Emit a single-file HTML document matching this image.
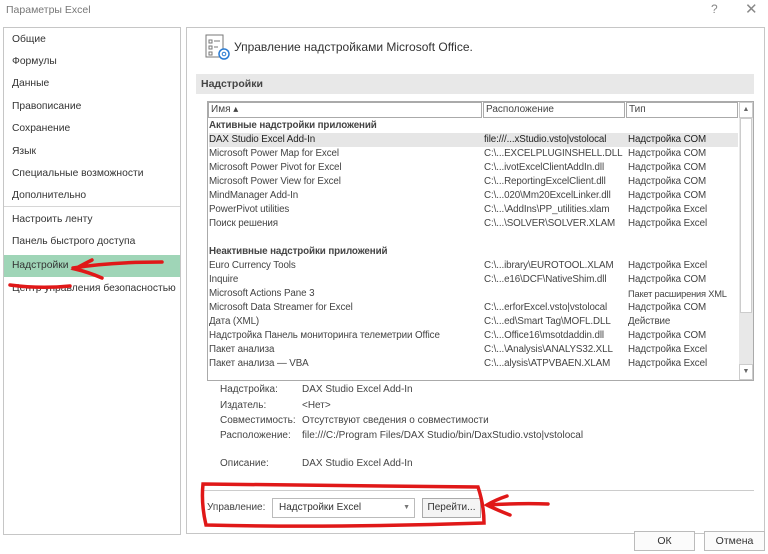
<!DOCTYPE html>
<html><head><meta charset="utf-8"><style>
*{margin:0;padding:0;box-sizing:border-box}
body{width:768px;height:554px;background:#fff;font-family:"Liberation Sans",sans-serif;font-size:10px;color:#444;position:relative;overflow:hidden}
.a{position:absolute;white-space:nowrap}
.l{left:12px;font-size:10.3px;color:#333}
.r{position:absolute;left:209px;height:14px;line-height:14px;width:529px;font-size:9.8px;letter-spacing:-0.1px}
.r span{position:absolute}
.c2{left:275px}.c3{left:419px}
</style></head><body>
<div class="a" style="left:6px;top:4px;color:#777;font-size:10.5px">Параметры Excel</div>
<div class="a" style="left:711px;top:2px;color:#888;font-size:12px">?</div>
<div class="a" style="left:745px;top:0px;color:#888;font-size:15px">✕</div>
<div class="a" style="left:3px;top:27px;width:178px;height:508px;border:1px solid #c6c6c6"></div>
<div class="a" style="left:186px;top:27px;width:579px;height:507px;border:1px solid #c6c6c6"></div>
<div class="a l" style="top:34px">Общие</div>
<div class="a l" style="top:56px">Формулы</div>
<div class="a l" style="top:78px">Данные</div>
<div class="a l" style="top:101px">Правописание</div>
<div class="a l" style="top:123px">Сохранение</div>
<div class="a l" style="top:146px">Язык</div>
<div class="a l" style="top:168px">Специальные возможности</div>
<div class="a l" style="top:190px">Дополнительно</div>
<div class="a" style="left:4px;top:206px;width:176px;border-top:1px solid #d6d6d6"></div>
<div class="a l" style="top:214px">Настроить ленту</div>
<div class="a l" style="top:236px">Панель быстрого доступа</div>
<div class="a" style="left:4px;top:255px;width:176px;height:22px;background:#9fd5b7"></div>
<div class="a l" style="top:260px">Надстройки</div>
<div class="a l" style="top:283px">Центр управления безопасностью</div>
<svg class="a" style="left:205px;top:34px" width="26" height="28" viewBox="0 0 26 28"><rect x="1" y="1" width="17" height="22" fill="none" stroke="#777"/><path d="M4 6h3v3H4zM4 12h3v3H4zM4 18h3v3H4z" fill="none" stroke="#777"/><path d="M9 7h6M9 13h4" stroke="#777"/><circle cx="19" cy="20" r="5" fill="#fff" stroke="#2b7cd3" stroke-width="1.5"/><circle cx="19" cy="20" r="1.8" fill="none" stroke="#2b7cd3"/></svg>
<div class="a" style="left:234px;top:40px;font-size:12px;color:#333">Управление надстройками Microsoft Office.</div>
<div class="a" style="left:196px;top:74px;width:558px;height:20px;background:#e8e8e8"></div>
<div class="a" style="left:201px;top:78px;font-weight:bold;color:#444;font-size:10.5px">Надстройки</div>
<div class="a" style="left:207px;top:101px;width:547px;height:280px;border:1px solid #aaa"></div>
<div class="a" style="left:208px;top:102px;width:274px;height:16px;border:1px solid #aaa;background:#fff;padding-left:2px;line-height:14px">Имя ▴</div>
<div class="a" style="left:483px;top:102px;width:142px;height:16px;border:1px solid #aaa;line-height:14px;padding-left:2px">Расположение</div>
<div class="a" style="left:626px;top:102px;width:112px;height:16px;border:1px solid #aaa;line-height:14px;padding-left:2px">Тип</div>
<div class="a" style="left:739px;top:102px;width:14px;height:278px;background:#e8e8e8"></div>
<div class="a" style="left:739px;top:102px;width:14px;height:16px;background:#fff;border:1px solid #ccc;font-size:7px;text-align:center;line-height:14px;color:#666">▲</div>
<div class="a" style="left:740px;top:118px;width:12px;height:195px;background:#fff;border:1px solid #ccc"></div>
<div class="a" style="left:739px;top:364px;width:14px;height:16px;background:#fff;border:1px solid #ccc;font-size:7px;text-align:center;line-height:14px;color:#666">▼</div>
<div class="r" style="top:119px;font-weight:bold"><span>Активные надстройки приложений</span></div>
<div class="r" style="top:133px;background:#e6e6e6;color:#222"><span>DAX Studio Excel Add-In</span><span class="c2">file:///...xStudio.vsto|vstolocal</span><span class="c3">Надстройка COM</span></div>
<div class="r" style="top:147px"><span>Microsoft Power Map for Excel</span><span class="c2">C:\...EXCELPLUGINSHELL.DLL</span><span class="c3">Надстройка COM</span></div>
<div class="r" style="top:161px"><span>Microsoft Power Pivot for Excel</span><span class="c2">C:\...ivotExcelClientAddIn.dll</span><span class="c3">Надстройка COM</span></div>
<div class="r" style="top:175px"><span>Microsoft Power View for Excel</span><span class="c2">C:\...ReportingExcelClient.dll</span><span class="c3">Надстройка COM</span></div>
<div class="r" style="top:189px"><span>MindManager Add-In</span><span class="c2">C:\...020\Mm20ExcelLinker.dll</span><span class="c3">Надстройка COM</span></div>
<div class="r" style="top:203px"><span>PowerPivot utilities</span><span class="c2">C:\...\AddIns\PP_utilities.xlam</span><span class="c3">Надстройка Excel</span></div>
<div class="r" style="top:217px"><span>Поиск решения</span><span class="c2">C:\...\SOLVER\SOLVER.XLAM</span><span class="c3">Надстройка Excel</span></div>
<div class="r" style="top:245px;font-weight:bold"><span>Неактивные надстройки приложений</span></div>
<div class="r" style="top:259px"><span>Euro Currency Tools</span><span class="c2">C:\...ibrary\EUROTOOL.XLAM</span><span class="c3">Надстройка Excel</span></div>
<div class="r" style="top:273px"><span>Inquire</span><span class="c2">C:\...e16\DCF\NativeShim.dll</span><span class="c3">Надстройка COM</span></div>
<div class="r" style="top:287px"><span>Microsoft Actions Pane 3</span><span class="c3" style="font-size:9.3px;letter-spacing:-0.2px">Пакет расширения XML</span></div>
<div class="r" style="top:301px"><span>Microsoft Data Streamer for Excel</span><span class="c2">C:\...erforExcel.vsto|vstolocal</span><span class="c3">Надстройка COM</span></div>
<div class="r" style="top:315px"><span>Дата (XML)</span><span class="c2">C:\...ed\Smart Tag\MOFL.DLL</span><span class="c3">Действие</span></div>
<div class="r" style="top:329px"><span>Надстройка Панель мониторинга телеметрии Office</span><span class="c2">C:\...Office16\msotdaddin.dll</span><span class="c3">Надстройка COM</span></div>
<div class="r" style="top:343px"><span>Пакет анализа</span><span class="c2">C:\...\Analysis\ANALYS32.XLL</span><span class="c3">Надстройка Excel</span></div>
<div class="r" style="top:357px"><span>Пакет анализа — VBA</span><span class="c2">C:\...alysis\ATPVBAEN.XLAM</span><span class="c3">Надстройка Excel</span></div>
<div class="a" style="left:220px;top:384px">Надстройка:</div><div class="a" style="left:302px;top:384px">DAX Studio Excel Add-In</div>
<div class="a" style="left:220px;top:400px">Издатель:</div><div class="a" style="left:302px;top:400px">&lt;Нет&gt;</div>
<div class="a" style="left:220px;top:415px">Совместимость:</div><div class="a" style="left:302px;top:415px">Отсутствуют сведения о совместимости</div>
<div class="a" style="left:220px;top:430px">Расположение:</div><div class="a" style="left:302px;top:430px">file:///C:/Program Files/DAX Studio/bin/DaxStudio.vsto|vstolocal</div>
<div class="a" style="left:220px;top:458px">Описание:</div><div class="a" style="left:302px;top:458px">DAX Studio Excel Add-In</div>
<div class="a" style="left:203px;top:490px;width:551px;border-top:1px solid #ccc"></div>
<div class="a" style="left:207px;top:502px">Управление:</div>
<div class="a" style="left:272px;top:498px;width:143px;height:20px;border:1px solid #bbb;padding-left:6px;line-height:18px;color:#333">Надстройки Excel<span style="position:absolute;right:4px;font-size:7px;color:#777">▼</span></div>
<div class="a" style="left:422px;top:498px;width:59px;height:20px;border:1px solid #aaa;background:#f4f4f4;text-align:center;line-height:18px;color:#333">Перейти...</div>
<div class="a" style="left:634px;top:531px;width:61px;height:20px;border:1px solid #bbb;background:#fbfbfb;text-align:center;line-height:18px;color:#333;font-size:10.5px">ОК</div>
<div class="a" style="left:704px;top:531px;width:61px;height:20px;border:1px solid #bbb;background:#fbfbfb;text-align:center;line-height:18px;color:#333;font-size:10.5px">Отмена</div>
<svg class="a" style="left:0;top:0" width="768" height="554">
<g fill="none" stroke="#e01818" stroke-width="3.5" stroke-linecap="round">
<path d="M73 268 Q110 262 162 262 M92 260 Q82 265 75 269 Q88 272 102 278"/>
<path d="M10 285 Q40 289 70 286"/>
<path d="M203 484 Q350 485 478 487 Q484 505 484 523 Q330 528 206 525 Q201 504 203 484Z"/>
<path d="M487 505 Q520 503 548 504 M507 496 Q495 500 487 505 Q497 510 510 515"/>
</g></svg>
</body></html>
